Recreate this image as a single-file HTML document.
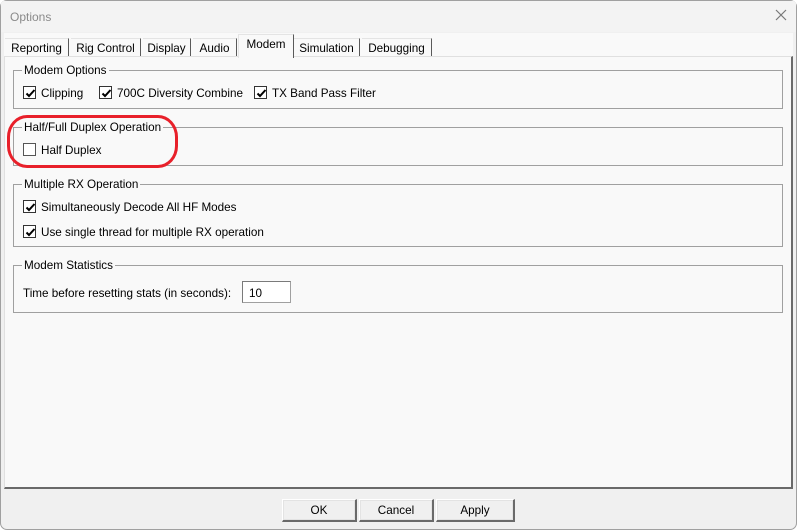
<!DOCTYPE html>
<html><head><meta charset="utf-8"><style>
*{margin:0;padding:0;box-sizing:border-box}
body{width:797px;height:530px;background:#ffffff;font-family:"Liberation Sans",sans-serif;font-size:11.7px;color:#000;position:relative;overflow:hidden}
.win{position:absolute;left:0;top:0;width:797px;height:530px;background:#f0f0f0;border-radius:7px;overflow:hidden;box-shadow:inset 0 0 0 1px #a0a0a0}
.title{position:absolute;left:1px;top:1px;width:795px;height:31px;background:#f3f3f3}
.title span{position:absolute;left:9px;top:9px;color:#8a8a8a;font-size:12px}
.x{position:absolute;left:772px;top:6px;width:16px;height:16px}
.strip{position:absolute;left:4px;top:33px;width:789px;height:24px;background:#f9f9f9}
.tab{position:absolute;top:38px;height:20px;background:#f9f9f9;border-right:1px solid #5a5a5a;border-top:1px solid #e4e4e4;padding-top:3px;text-align:center;font-size:11.7px}
.tab.sel{top:34px;height:24px;border-top:1px solid #e4e4e4;padding-top:3px;background:#f9f9f9;border-right:1px solid #5a5a5a;border-left:1px solid #e4e4e4}
.panel{position:absolute;left:4px;top:56px;width:789px;height:433px;background:#f9f9f9;border-left:1px solid #e0e0e0;border-top:1px solid #e0e0e0;border-right:2px solid #6a6a6a;border-bottom:2px solid #6a6a6a}
.grp{position:absolute;border:1px solid #a0a0a0}
.grp .lg{position:absolute;left:8px;top:-7px;background:#f9f9f9;padding:0 2px;font-size:11.7px;color:#000}
.cb{position:absolute;width:13px;height:13px;border:1px solid #333;background:#fff}
.cb svg{position:absolute;left:1px;top:1px}
.t{position:absolute;font-size:11.7px;white-space:nowrap}
.btn{position:absolute;top:499px;height:23px;background:#f0f0f0;border-top:1px solid #fff;border-left:1px solid #fff;border-right:2px solid #6a6a6a;border-bottom:2px solid #6a6a6a;text-align:center;padding-top:4px;font-size:11.7px;box-shadow:inset 0 0 0 1px #e3e3e3}
.red{position:absolute;left:7px;top:115px;width:171px;height:53px;border:3.5px solid #e8202a;border-radius:20px/22px}
</style></head><body>
<div class="win">
<div class="title"><span>Options</span>
<svg class="x" viewBox="0 0 16 16"><path d="M3 3L13 13M13 3L3 13" stroke="#777" stroke-width="1.2"/></svg></div>
<div class="strip"></div>
<div class="tab" style="left:5px;width:64px">Reporting</div>
<div class="tab" style="left:71px;width:70px">Rig Control</div>
<div class="tab" style="left:143px;width:48px">Display</div>
<div class="tab" style="left:193px;width:44px">Audio</div>
<div class="tab" style="left:294px;width:66px">Simulation</div>
<div class="tab" style="left:362px;width:70px">Debugging</div>
<div class="panel"></div>
<div class="tab sel" style="left:238px;width:56px">Modem</div>

<div class="grp" style="left:13px;top:70px;width:770px;height:39px"><span class="lg">Modem Options</span></div>
<div class="grp" style="left:13px;top:127px;width:770px;height:39px"><span class="lg">Half/Full Duplex Operation</span></div>
<div class="grp" style="left:13px;top:184px;width:770px;height:63px"><span class="lg">Multiple RX Operation</span></div>
<div class="grp" style="left:13px;top:265px;width:770px;height:48px"><span class="lg">Modem Statistics</span></div>

<div class="cb" style="left:23px;top:86px"><svg width="11" height="11" viewBox="0 0 11 11"><path d="M1.5 5.5L4 8L9.5 2" stroke="#000" stroke-width="2" fill="none"/></svg></div>
<div class="t" style="left:41px;top:87px">Clipping</div>
<div class="cb" style="left:99px;top:86px"><svg width="11" height="11" viewBox="0 0 11 11"><path d="M1.5 5.5L4 8L9.5 2" stroke="#000" stroke-width="2" fill="none"/></svg></div>
<div class="t" style="left:117px;top:87px">700C Diversity Combine</div>
<div class="cb" style="left:254px;top:86px"><svg width="11" height="11" viewBox="0 0 11 11"><path d="M1.5 5.5L4 8L9.5 2" stroke="#000" stroke-width="2" fill="none"/></svg></div>
<div class="t" style="left:272px;top:87px">TX Band Pass Filter</div>

<div class="cb" style="left:23px;top:143px;border-color:#555"></div>
<div class="t" style="left:41px;top:144px">Half Duplex</div>

<div class="cb" style="left:23px;top:200px"><svg width="11" height="11" viewBox="0 0 11 11"><path d="M1.5 5.5L4 8L9.5 2" stroke="#000" stroke-width="2" fill="none"/></svg></div>
<div class="t" style="left:41px;top:201px">Simultaneously Decode All HF Modes</div>
<div class="cb" style="left:23px;top:225px"><svg width="11" height="11" viewBox="0 0 11 11"><path d="M1.5 5.5L4 8L9.5 2" stroke="#000" stroke-width="2" fill="none"/></svg></div>
<div class="t" style="left:41px;top:226px">Use single thread for multiple RX operation</div>

<div class="t" style="left:23px;top:287px">Time before resetting stats (in seconds):</div>
<div style="position:absolute;left:242px;top:281px;width:49px;height:22px;background:#fff;border:1px solid #a0a0a0;border-top-color:#7a7a7a;border-left-color:#7a7a7a"><span style="position:absolute;left:6px;top:5px">10</span></div>

<div class="red"></div>

<div class="btn" style="left:282px;width:75px">OK</div>
<div class="btn" style="left:359px;width:75px">Cancel</div>
<div class="btn" style="left:436px;width:79px">Apply</div>
</div>
</body></html>
